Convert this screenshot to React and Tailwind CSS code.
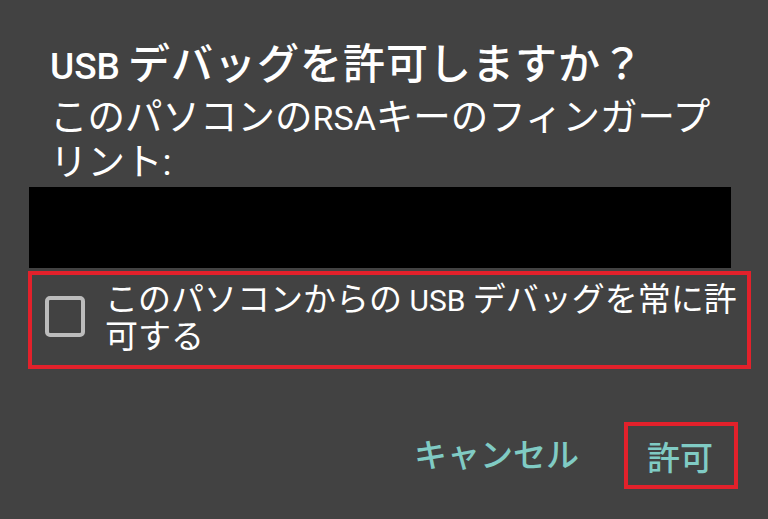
export default function App() {
  return (
    <div className="h-[519px] w-full overflow-hidden bg-[#424242] text-white font-['Roboto','Noto_Sans_CJK_JP',sans-serif]">
      {/* Header */}
      <div className="px-[50px] pt-[41px]">
        <h1 className="whitespace-nowrap text-[42px] font-medium leading-[48px] tracking-[1px]">
          <span className="mr-[8px] text-[37px] leading-none tracking-normal">USB</span>
          デバッグを許可しますか？
        </h1>
        <p className="mt-[6px] whitespace-nowrap text-[37.5px] leading-[45px]">
          このパソコンの<span className="text-[34px] leading-none">RSA</span>キーのフィンガープ
          <br />
          リント:
        </p>
      </div>

      {/* Fingerprint (hidden) */}
      <div className="ml-[29px] mt-[2px] h-[81px] w-[702px] bg-black" />

      {/* Always allow */}
      <label className="ml-[28px] mt-[3px] flex h-[98px] w-[723px] border-4 border-[#e3212b]">
        <span className="ml-[13px] mt-[21px] h-[41px] w-[40px] shrink-0 rounded-[5px] border-[4px] border-[#bcbcbc]" />
        <span className="ml-[20px] whitespace-nowrap pt-[6px] text-[33px] leading-[37px]">
          このパソコンからの<span className="text-[30px] leading-none"> USB </span>デバッグを常に許
          <br />
          可する
        </span>
      </label>

      {/* Actions */}
      <div className="mr-[30px] mt-[53px] flex items-center justify-end text-[33px] font-medium text-[#80cbc4]">
        <button className="mr-[45px] leading-[38px]">キャンセル</button>
        <button className="border-4 border-[#e3212b] pb-[7px] pl-[19px] pr-[21px] pt-[14px] leading-[38px]">
          許可
        </button>
      </div>
    </div>
  );
}
